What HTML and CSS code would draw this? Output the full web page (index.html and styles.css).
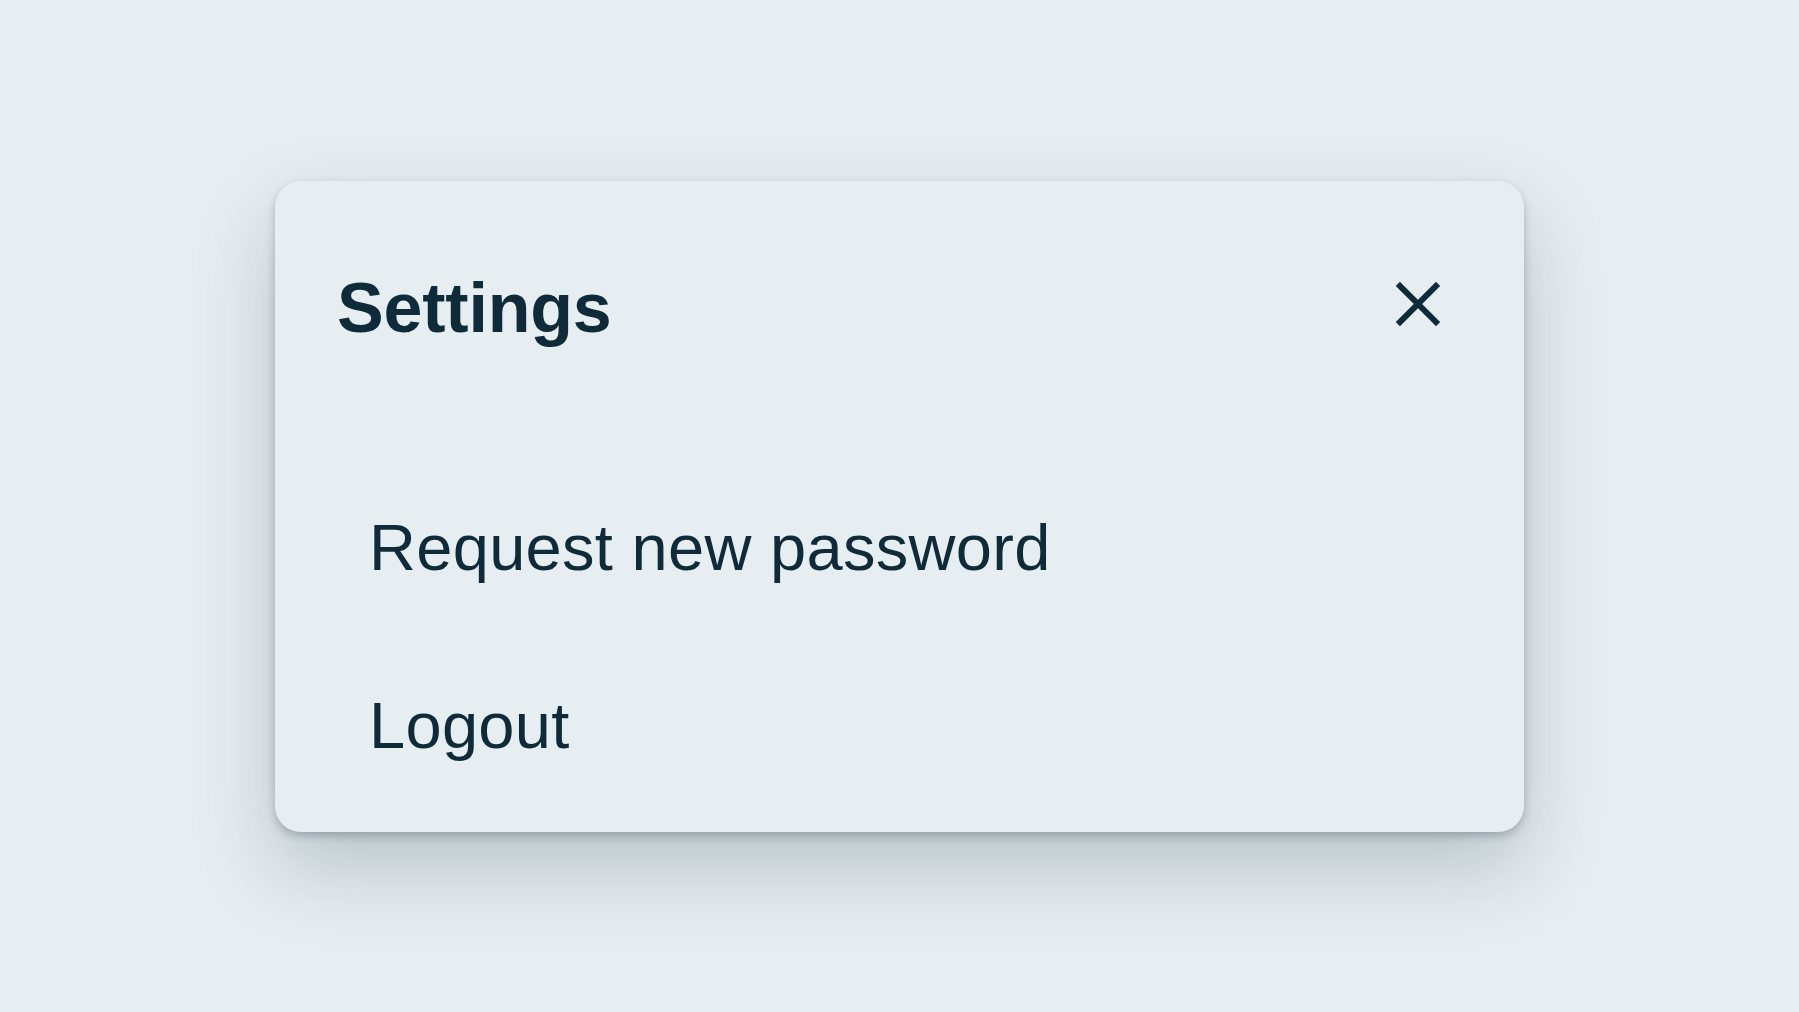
FILE: index.html
```html
<!DOCTYPE html>
<html>
<head>
    <title>Settings</title>
    <link rel="stylesheet" href="styles.css">
</head>
<body>
    <div class="dialog">
        <div class="dialog-header">
            <h2>Settings</h2>
            <button class="close-btn" aria-label="Close">
                <svg viewBox="0 0 46 46" width="46" height="46">
                    <path d="M5 5 L41 41 M41 5 L5 41" stroke="#0f2b3a" stroke-width="6" stroke-linecap="square" fill="none"/>
                </svg>
            </button>
        </div>
        <ul class="menu">
            <li><a href="#">Request new password</a></li>
            <li><a href="#">Logout</a></li>
        </ul>
    </div>
</body>
</html>
```

FILE: styles.css
```css
html, body {
    margin: 0;
    height: 100%;
}
body {
    font-family: "Liberation Sans", Arial, sans-serif;
    background-color: #e7eef1;
    color: #0f2b3a;
    display: flex;
    align-items: center;
    justify-content: center;
}
.dialog {
    width: 1249px;
    box-sizing: border-box;
    padding: 87px 83px 17px 62px;
    background-color: #e7eef1;
    border-radius: 26px;
    box-shadow: 0 4px 8px rgba(20, 30, 40, 0.24), 0 36px 80px rgba(20, 40, 55, 0.22);
}
.dialog-header {
    display: flex;
    justify-content: space-between;
    align-items: center;
    margin-bottom: 111px;
}
.dialog-header h2 {
    margin: 0;
    font-size: 70px;
    line-height: 80px;
    font-weight: 700;
    letter-spacing: -0.2px;
}
.close-btn {
    width: 46px;
    height: 46px;
    padding: 0;
    margin-bottom: 8px;
    border: none;
    background: none;
    cursor: pointer;
}
.close-btn svg {
    display: block;
}
.menu {
    list-style: none;
    margin: 0;
    padding: 0;
}
.menu li a {
    display: block;
    padding: 40px 32px;
    font-size: 65px;
    line-height: 98px;
    letter-spacing: 0.3px;
    color: #0f2b3a;
    text-decoration: none;
}
```
